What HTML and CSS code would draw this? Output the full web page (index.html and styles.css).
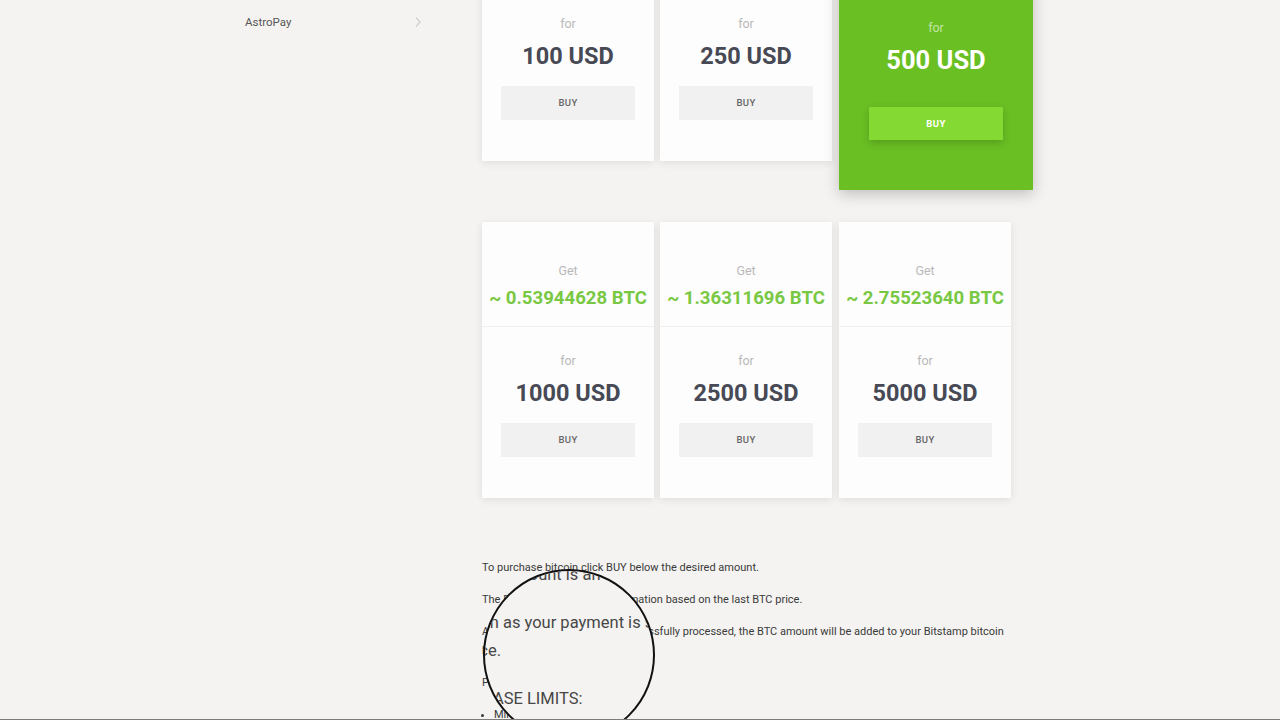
FILE: index.html
```html
<!DOCTYPE html>
<html lang="en">
<head>
<meta charset="utf-8">
<title>Buy bitcoin</title>
<link rel="stylesheet" href="styles.css">
</head>
<body>
<div class="page">
  <aside class="sidebar">
    <div class="side-item">
      <span>AstroPay</span>
      <svg class="chev" width="8" height="12" viewBox="0 0 8 12"><polyline points="2,1.5 6,6 2,10.5" fill="none" stroke="#cfcfcf" stroke-width="1.2"/></svg>
    </div>
  </aside>
  <main class="main">
    <div class="row row-first">
      <div class="card">
        <div class="card-top"><div class="get">Get</div><div class="btc">~ 0.05394463 BTC</div></div>
        <div class="card-bottom"><div class="for">for</div><div class="usd">100 USD</div><div class="buy">BUY</div></div>
      </div>
      <div class="card">
        <div class="card-top"><div class="get">Get</div><div class="btc">~ 0.13631170 BTC</div></div>
        <div class="card-bottom"><div class="for">for</div><div class="usd">250 USD</div><div class="buy">BUY</div></div>
      </div>
      <div class="card card-active">
        <div class="card-top"><div class="get">Get</div><div class="btc">~ 0.27552364 BTC</div></div>
        <div class="card-bottom"><div class="for">for</div><div class="usd">500 USD</div><div class="buy">BUY</div></div>
      </div>
    </div>
    <div class="row row-second">
      <div class="card">
        <div class="card-top"><div class="get">Get</div><div class="btc">~ 0.53944628 BTC</div></div>
        <div class="card-bottom"><div class="for">for</div><div class="usd">1000 USD</div><div class="buy">BUY</div></div>
      </div>
      <div class="card">
        <div class="card-top"><div class="get">Get</div><div class="btc">~ 1.36311696 BTC</div></div>
        <div class="card-bottom"><div class="for">for</div><div class="usd">2500 USD</div><div class="buy">BUY</div></div>
      </div>
      <div class="card">
        <div class="card-top"><div class="get">Get</div><div class="btc">~ 2.75523640 BTC</div></div>
        <div class="card-bottom"><div class="for">for</div><div class="usd">5000 USD</div><div class="buy">BUY</div></div>
      </div>
    </div>
    <div class="info">
      <div class="info-text">
        <p>To purchase bitcoin click BUY below the desired amount.</p>
        <p>The BTC amount is an approximation based on the last BTC price.</p>
        <p>As soon as your payment is successfully processed, the BTC amount will be added to your Bitstamp bitcoin balance.</p>
        <p>PURCHASE LIMITS:</p>
        <ul><li>Min: 10 USD</li></ul>
      </div>
      <div class="lens">
        <div class="info-text lens-text">
          <p>To purchase bitcoin click BUY below the desired amount.</p>
          <p>The BTC amount is an approximation based on the last BTC price.</p>
          <p>As soon as your payment is successfully processed, the BTC amount will be added to your Bitstamp bitcoin balance.</p>
          <p>PURCHASE LIMITS:</p>
          <ul><li>Min: 10 USD</li></ul>
        </div>
      </div>
    </div>
  </main>
</div>
<div class="frame-line"></div>
</body>
</html>
```
FILE: styles.css
```css
html, body {
  margin: 0;
  height: 720px;
  overflow: hidden;
}
body {
  background: #f4f3f1;
  font-family: Roboto, "Liberation Sans", Arial, sans-serif;
  color: #333;
}
.page {
  display: flex;
  padding-left: 245px;
}
.sidebar {
  width: 180px;
  padding-top: 14px;
  flex: none;
}
.side-item {
  display: flex;
  justify-content: space-between;
  align-items: center;
  width: 177px;
  font-size: 11.5px;
  line-height: 16px;
  color: #555;
}
.main {
  margin-left: 57px;
  margin-top: -115px;
  width: 560px;
}
.row {
  display: flex;
  gap: 6px;
  align-items: flex-start;
}
.row-second {
  margin-top: 61px;
}
.card {
  width: 172px;
  height: 276px;
  background: #fdfdfd;
  box-shadow: 0 2px 8px rgba(0, 0, 0, 0.09);
  text-align: center;
  box-sizing: border-box;
}
.row .card:last-child {
  margin-left: 1px;
}
.card-top {
  height: 105px;
  padding-top: 41px;
  box-sizing: border-box;
  border-bottom: 1px solid #efefef;
}
.get, .for {
  font-size: 12.5px;
  line-height: 16px;
  color: #b9b9b9;
}
.btc {
  margin-top: 9px;
  font-size: 18.6px;
  line-height: 20px;
  font-weight: 700;
  color: #79c843;
  white-space: nowrap;
}
.card-bottom {
  padding-top: 26px;
}
.usd {
  margin-top: 10px;
  font-size: 23.5px;
  line-height: 28px;
  font-weight: 700;
  color: #474955;
}
.buy {
  width: 134px;
  height: 34px;
  margin: 16px auto 0;
  background: #f1f1f1;
  font-size: 9.5px;
  font-weight: 500;
  letter-spacing: 0.4px;
  line-height: 34px;
  color: #666;
}
.card-active {
  width: 194px;
  height: 311px;
  margin-top: -6px;
  margin-bottom: -29px;
  background: #6abf23;
  box-shadow: 0 4px 14px rgba(0, 0, 0, 0.22);
  position: relative;
  z-index: 1;
}
.card-active .card-top {
  height: 114px;
  border-bottom: none;
}
.card-active .get {
  color: rgba(255, 255, 255, 0.6);
}
.card-active .btc {
  color: #fff;
}
.card-active .card-bottom {
  padding-top: 27px;
}
.card-active .for {
  color: rgba(255, 255, 255, 0.6);
}
.card-active .usd {
  margin-top: 9px;
  font-size: 25.5px;
  line-height: 30px;
  color: #fff;
}
.card-active .buy {
  height: 33px;
  line-height: 33px;
  margin-top: 32px;
  background: #84d932;
  color: #fff;
  font-weight: 700;
  box-shadow: 0 3px 8px rgba(0, 0, 0, 0.18);
}
.info {
  position: relative;
  margin-top: 60px;
}
.info-text {
  width: 529px;
  font-size: 11px;
  line-height: 19px;
  color: #3a3a3a;
}
.info-text p {
  margin: 0 0 13px;
}
.info-text ul {
  margin: 11px 0 0;
  padding-left: 12px;
}
.lens {
  position: absolute;
  left: 1px;
  top: 11px;
  width: 172px;
  height: 172px;
  border: 2px solid #111;
  border-radius: 50%;
  box-sizing: border-box;
  overflow: hidden;
  background: #f4f3f1;
}
.lens-text {
  position: absolute;
  left: -3px;
  top: -13px;
  transform-origin: 86px 92px;
  transform: scale(1.5);
  color: #474747;
}
.frame-line {
  position: fixed;
  left: 0;
  right: 0;
  bottom: 0;
  height: 1px;
  background: #7d7c79;
}
```
